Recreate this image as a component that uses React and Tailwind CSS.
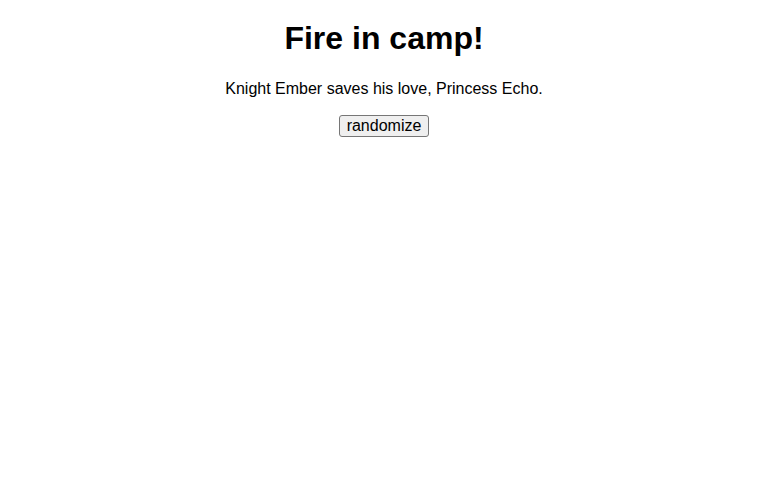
import { useState } from 'react';

const knights = ['Knight Ember', 'Sir Ashford', 'Lady Rowan'];
const loves = ['Princess Echo', 'Prince Talon', 'Duchess Mira'];

export default function App() {
  const [pick, setPick] = useState([0, 0]);
  const randomize = () =>
    setPick([Math.floor(Math.random() * knights.length), Math.floor(Math.random() * loves.length)]);

  return (
    <div className="text-center text-black bg-white min-h-screen font-['Liberation_Sans',Arial,sans-serif] text-[16px] pt-[0.1px]">
      <h1 className="text-[32px] font-bold leading-[normal] mt-[20px] mb-[23px]">Fire in camp!</h1>
      <p className="my-4 leading-[normal]">
        {knights[pick[0]]} saves his love, {loves[pick[1]]}.
      </p>
      <button
        onClick={randomize}
        className="bg-[#efefef] hover:bg-[#e5e5e5] border border-[#767676] rounded-[3px] px-[7px] py-[1px] leading-[normal] text-[16px]"
      >
        randomize
      </button>
    </div>
  );
}
